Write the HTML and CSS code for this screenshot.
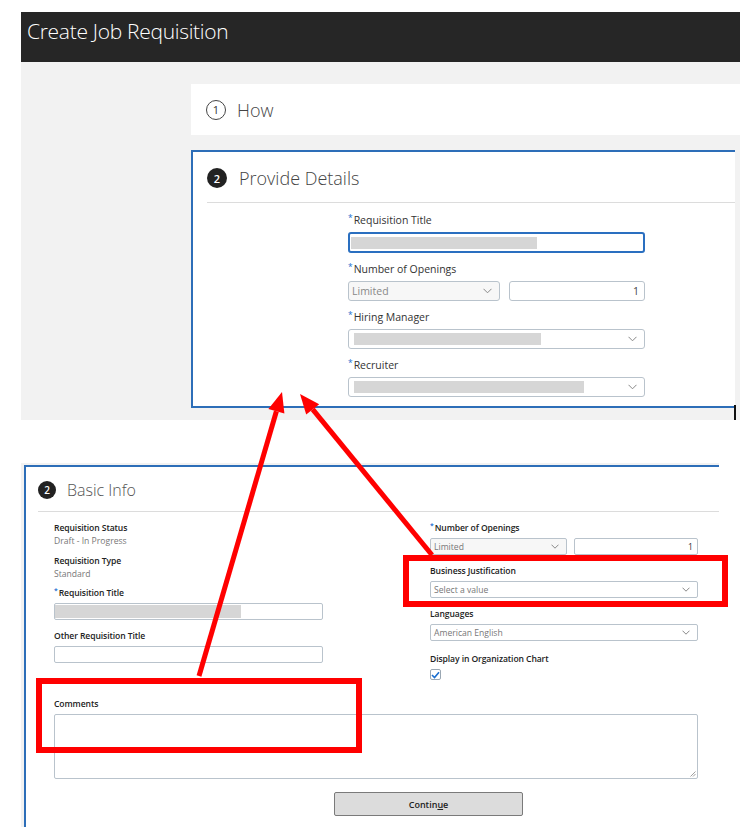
FILE: index.html
```html
<!DOCTYPE HTML>
<html>
<head>
	<meta http-equiv="Content-Type" content="text/html; charset=utf-8">
	<title>Create Job Requisition</title>
	<link rel="stylesheet" href="styles.css">
</head>
<body>

<!-- first capture: the guided flow -->
<div class="shot-top">
	<div class="appbar">Create Job Requisition</div>
	<div class="stage">
		<div class="step-done">
			<span class="num num-open">1</span><span class="step-title">How</span>
		</div>
		<div class="step-card">
			<div class="step-head">
				<span class="num num-fill">2</span><span class="step-title">Provide Details</span>
			</div>
			<div class="form">
				<div class="fld">
					<div class="lbl"><span class="req">*</span>Requisition Title</div>
					<div class="box box-focus"><span class="redact r1"></span></div>
				</div>
				<div class="fld">
					<div class="lbl"><span class="req">*</span>Number of Openings</div>
					<div class="pair">
						<div class="box sel sel-limit"><span class="ph">Limited</span><svg class="chev" width="9" height="6" viewBox="0 0 9 6"><polyline points="0.5,0.8 4.5,4.8 8.5,0.8"/></svg></div>
						<div class="box num-box">1</div>
					</div>
				</div>
				<div class="fld">
					<div class="lbl"><span class="req">*</span>Hiring Manager</div>
					<div class="box sel"><span class="redact r2"></span><svg class="chev" width="9" height="6" viewBox="0 0 9 6"><polyline points="0.5,0.8 4.5,4.8 8.5,0.8"/></svg></div>
				</div>
				<div class="fld">
					<div class="lbl"><span class="req">*</span>Recruiter</div>
					<div class="box sel"><span class="redact r3"></span><svg class="chev" width="9" height="6" viewBox="0 0 9 6"><polyline points="0.5,0.8 4.5,4.8 8.5,0.8"/></svg></div>
				</div>
			</div>
		</div>
	</div>
</div>

<!-- second capture: the classic form -->
<div class="shot-bottom">
	<div class="info-card">
		<div class="info-head">
			<span class="num num-fill num-sm">2</span><span class="info-title">Basic Info</span>
		</div>
		<div class="cols">
			<div class="col">
				<div class="ro">
					<div class="s-lbl">Requisition Status</div>
					<div class="s-val">Draft - In Progress</div>
				</div>
				<div class="ro">
					<div class="s-lbl">Requisition Type</div>
					<div class="s-val">Standard</div>
				</div>
				<div class="s-fld">
					<div class="s-lbl"><span class="req">*</span>Requisition Title</div>
					<div class="s-box s-redacted"><span class="redact r4"></span></div>
				</div>
				<div class="s-fld">
					<div class="s-lbl">Other Requisition Title</div>
					<div class="s-box"></div>
				</div>
			</div>
			<div class="col">
				<div class="s-fld">
					<div class="s-lbl"><span class="req">*</span>Number of Openings</div>
					<div class="s-pair">
						<div class="s-box s-sel s-limit"><span class="ph">Limited</span><svg class="chev" width="8" height="5" viewBox="0 0 8 5"><polyline points="0.5,0.7 4,4.2 7.5,0.7"/></svg></div>
						<div class="s-box s-num">1</div>
					</div>
				</div>
				<div class="s-fld">
					<div class="s-lbl">Business Justification</div>
					<div class="s-box s-sel"><span class="ph">Select a value</span><svg class="chev" width="8" height="5" viewBox="0 0 8 5"><polyline points="0.5,0.7 4,4.2 7.5,0.7"/></svg></div>
				</div>
				<div class="s-fld">
					<div class="s-lbl">Languages</div>
					<div class="s-box s-sel"><span class="ph">American English</span><svg class="chev" width="8" height="5" viewBox="0 0 8 5"><polyline points="0.5,0.7 4,4.2 7.5,0.7"/></svg></div>
				</div>
				<div class="s-fld s-check">
					<div class="s-lbl">Display in Organization Chart</div>
					<div class="cbox"><svg width="9" height="8" viewBox="0 0 9 8"><polyline points="1,4 3.5,6.5 8,1.2"/></svg></div>
				</div>
			</div>
		</div>
		<div class="comments">
			<div class="s-lbl">Comments</div>
			<div class="s-area"><svg class="grip" width="6" height="6" viewBox="0 0 6 6"><line x1="5.5" y1="0.5" x2="0.5" y2="5.5"/><line x1="5.5" y1="3" x2="3" y2="5.5"/></svg></div>
		</div>
		<div class="actions"><div class="btn">Contin<u>u</u>e</div></div>
	</div>
</div>

<!-- red call-outs drawn over both captures -->
<svg class="marks" width="740" height="828" viewBox="0 0 740 828">
	<rect x="406" y="558" width="319" height="46"/>
	<rect x="39" y="681" width="320" height="69"/>
	<line x1="199" y1="676" x2="276.4" y2="411.2"/>
	<polygon points="282,392 284.4,413.6 268.4,409"/>
	<line x1="432" y1="555" x2="312.7" y2="409.4"/>
	<polygon points="300,394 319.2,404.3 306.2,414.5"/>
</svg>

</body>
</html>
```

FILE: styles.css
```css
body {
	margin:0;
	background:#fff;
	font-family:"Open Sans", "Noto Sans", sans-serif;
	color:#333;
	}
.shot-top {
	margin:12px 0 0 21px;
	}
.appbar {
	height:50px;
	background:#262626;
	color:#fff;
	font-size:21px;
	font-weight:300;
	line-height:38px;
	padding-left:6px;
	letter-spacing:-0.3px;
	}
.stage {
	position:relative;
	background:#f2f2f2;
	padding:22px 0 12px 170px;
	}
.stage:after {
	content:"";
	position:absolute;
	right:4px;
	bottom:0;
	width:2px;
	height:15px;
	background:#111;
	}
.num {
	display:inline-flex;
	align-items:center;
	justify-content:center;
	width:20px;
	height:20px;
	border-radius:50%;
	font-size:11px;
	box-sizing:border-box;
	flex:none;
	}
.num-open {
	border:1px solid #444;
	color:#333;
	}
.num-fill {
	background:#222;
	color:#fff;
	font-weight:600;
	}
.num-sm {
	width:18px;
	height:18px;
	font-size:10px;
	}
.step-title {
	font-size:18px;
	font-weight:300;
	color:#444;
	margin-left:12px;
	}
.step-done {
	display:flex;
	align-items:center;
	height:51px;
	background:#fff;
	padding-left:15px;
	}
.step-done .step-title {
	margin-left:11px;
	}
.step-card {
	margin:15px 5px 0 0;
	background:#fff;
	border:2px solid #2d6eb8;
	border-right:none;
	padding:0 0 9px 14px;
	}
.step-head {
	display:flex;
	align-items:center;
	height:20px;
	padding:16px 0 14px 0;
	border-bottom:1px solid #dcdcdc;
	}
.form {
	width:297px;
	margin-left:141px;
	padding-top:10px;
	}
.fld {
	margin-bottom:9px;
	}
.fld:last-child {
	margin-bottom:0;
	}
.lbl {
	font-size:10.5px;
	line-height:15px;
	color:#333;
	margin-bottom:4px;
	}
.req {
	color:#1a6ecf;
	font-size:0.8em;
	vertical-align:top;
	line-height:1.2;
	margin-right:1px;
	}
.box {
	position:relative;
	display:flex;
	align-items:center;
	height:20px;
	box-sizing:border-box;
	border:1px solid #b9c3cc;
	border-radius:3px;
	background:#fff;
	padding:0 3px;
	font-size:10.5px;
	color:#888;
	}
.box-focus {
	height:21px;
	border:2px solid #2a6fc0;
	padding:0 1px;
	}
.sel .chev, .s-sel .chev {
	position:absolute;
	right:7px;
	top:50%;
	margin-top:-3px;
	}
.chev polyline {
	fill:none;
	stroke:#888;
	stroke-width:1;
	}
.pair {
	display:flex;
	gap:9px;
	}
.sel-limit {
	width:152px;
	background:#f7f7f7;
	}
.num-box {
	flex:1;
	justify-content:flex-end;
	color:#444;
	padding-right:5px;
	}
.redact {
	display:block;
	height:12px;
	background:#d6d6d6;
	}
.r1 { width:186px; }
.r2 { width:187px; margin-left:2px; }
.r3 { width:230px; margin-left:2px; }
.r4 { width:186px; height:13px; }

/* second capture */
.shot-bottom {
	margin:43px 0 0 21px;
	width:698px;
	background:#f2f2f2;
	padding:2px 0 0 3px;
	box-sizing:border-box;
	}
.info-card {
	background:#fff;
	border-top:2px solid #2d6eb8;
	border-left:2px solid #2d6eb8;
	padding:0 0 11px 12px;
	}
.info-head {
	display:flex;
	align-items:center;
	height:18px;
	padding:14px 0 12px 0;
	border-bottom:1px solid #dcdcdc;
	}
.info-title {
	font-size:16px;
	font-weight:300;
	color:#555;
	margin-left:11px;
	}
.cols {
	display:grid;
	grid-template-columns:269px 268px;
	column-gap:107px;
	padding:10px 0 0 16px;
	}
.s-lbl {
	font-size:8.6px;
	line-height:13px;
	font-weight:600;
	color:#222;
	letter-spacing:-0.1px;
	}
.s-val {
	font-size:8.6px;
	line-height:13px;
	color:#777;
	}
.ro {
	margin-bottom:7px;
	}
.ro + .ro {
	margin-bottom:6px;
	}
.s-fld {
	margin-bottom:10px;
	}
.s-fld .s-lbl {
	margin-bottom:3px;
	}
.s-box {
	position:relative;
	display:flex;
	align-items:center;
	height:17px;
	box-sizing:border-box;
	border:1px solid #b9c3cc;
	border-radius:2px;
	background:#fff;
	font-size:8.6px;
	color:#777;
	padding:0 2px;
	}
.s-redacted {
	padding:0;
	}
.s-sel {
	padding-left:3px;
	}
.s-pair {
	display:flex;
	gap:7px;
	}
.s-limit {
	width:137px;
	background:#f7f7f7;
	}
.s-num {
	flex:1;
	justify-content:flex-end;
	color:#333;
	padding-right:4px;
	}
.s-check {
	margin:12px 0 0 0;
	}
.cbox {
	width:11px;
	height:11px;
	box-sizing:border-box;
	border:1px solid #9aa7b3;
	border-radius:2px;
	display:flex;
	align-items:center;
	justify-content:center;
	}
.cbox polyline {
	fill:none;
	stroke:#1a6ecf;
	stroke-width:1.6;
	}
.comments {
	width:644px;
	margin:18px 0 0 16px;
	}
.comments .s-lbl {
	margin-bottom:3px;
	}
.s-area {
	position:relative;
	height:65px;
	box-sizing:border-box;
	border:1px solid #b9c3cc;
	border-radius:2px;
	}
.grip {
	position:absolute;
	right:1px;
	bottom:1px;
	}
.grip line {
	stroke:#888;
	stroke-width:0.8;
	}
.actions {
	padding:13px 0 0 296px;
	}
.btn {
	width:189px;
	height:24px;
	box-sizing:border-box;
	border:1px solid #7a7a7a;
	border-radius:2px;
	background:#dcdcdc;
	display:flex;
	align-items:center;
	justify-content:center;
	font-size:9px;
	font-weight:600;
	color:#222;
	}
.btn u {
	text-decoration-thickness:1px;
	}

/* annotations */
.marks {
	position:absolute;
	left:0;
	top:0;
	pointer-events:none;
	}
.marks rect {
	fill:none;
	stroke:#ff0000;
	stroke-width:6;
	}
.marks line {
	stroke:#ff0000;
	stroke-width:5;
	}
.marks polygon {
	fill:#ff0000;
	}
```
